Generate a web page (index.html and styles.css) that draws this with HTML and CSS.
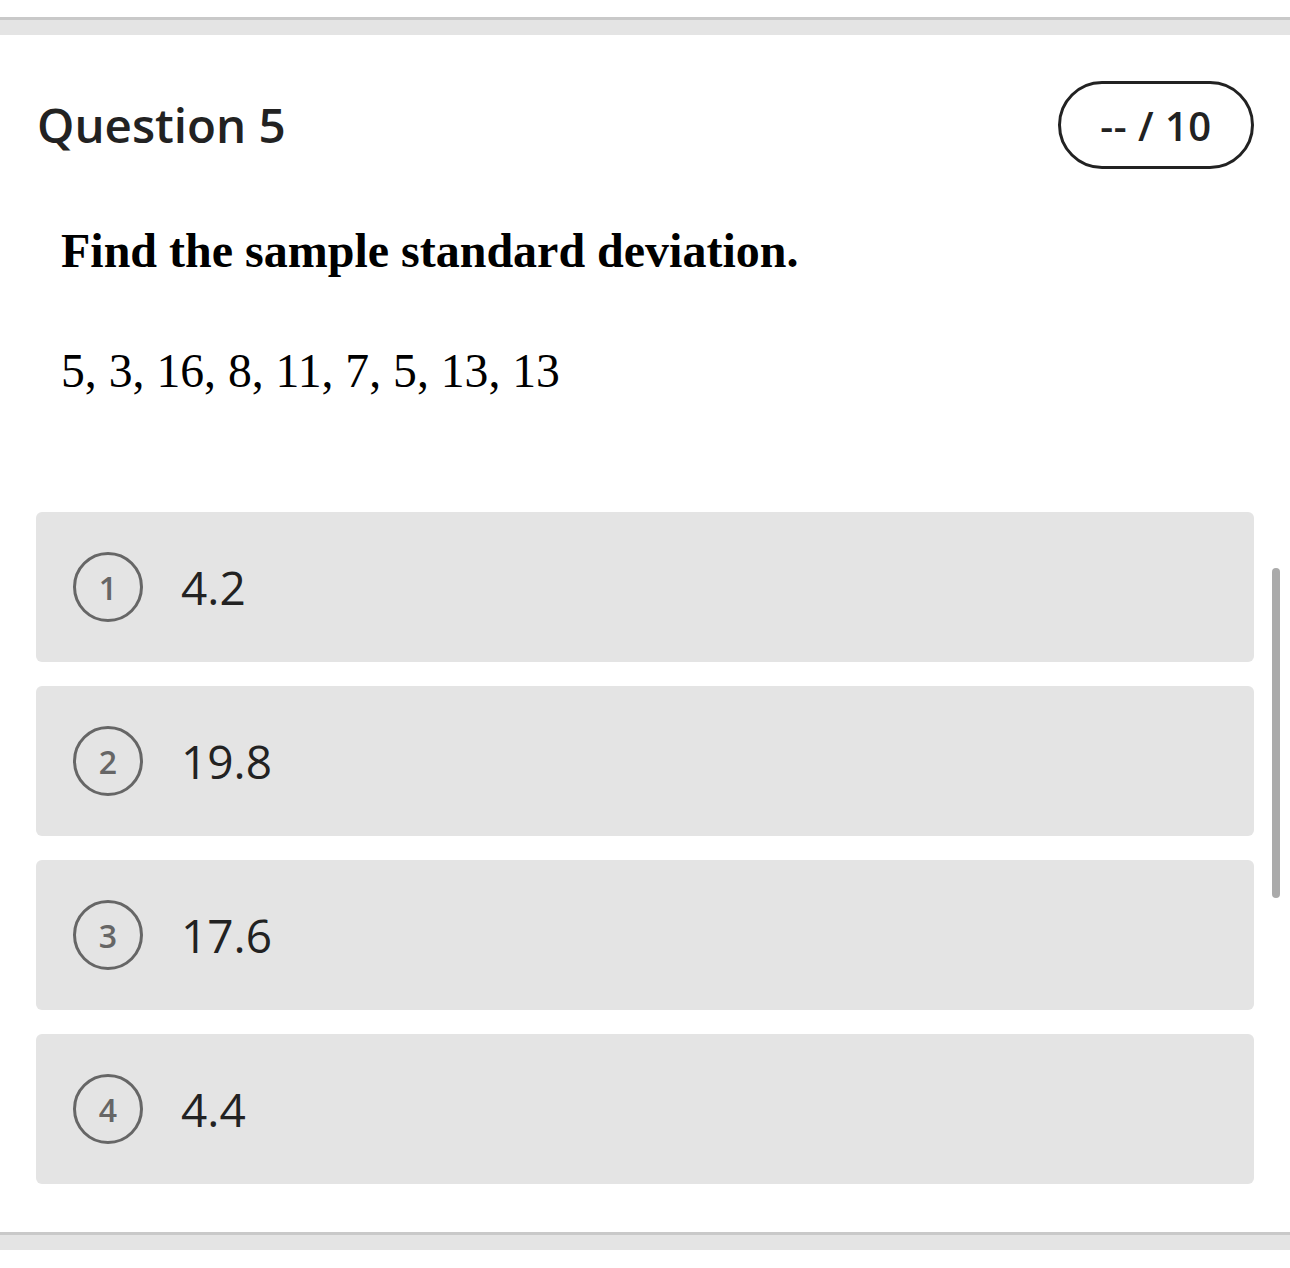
FILE: index.html
```html
<!DOCTYPE html>
<html>

<head lang="en">
    <meta charset="UTF-8">
    <title>Question 5</title>
    <link rel="stylesheet" href="styles.css">
</head>

<body>
    <div class="bar bar-top"></div>

    <div class="question">
        <div class="question-head">
            <h2 class="question-title">Question 5</h2>
            <div class="points">-- / 10</div>
        </div>

        <div class="prompt">
            <p class="prompt-title">Find the sample standard deviation.</p>
            <p class="prompt-data">5, 3, 16, 8, 11, 7, 5, 13, 13</p>
        </div>

        <ul class="answers">
            <li class="answer">
                <span class="answer-num">1</span>
                <span class="answer-text">4.2</span>
            </li>
            <li class="answer">
                <span class="answer-num">2</span>
                <span class="answer-text">19.8</span>
            </li>
            <li class="answer">
                <span class="answer-num">3</span>
                <span class="answer-text">17.6</span>
            </li>
            <li class="answer">
                <span class="answer-num">4</span>
                <span class="answer-text">4.4</span>
            </li>
        </ul>
    </div>

    <div class="bar bar-bottom"></div>

    <div class="scrollbar"></div>
</body>

</html>
```

FILE: styles.css
```css
/*reset*/
body,
h2,
p,
ul,
li {
    margin: 0;
    padding: 0;
}

ul {
    list-style: none;
}

body {
    font-family: "Open Sans", "Noto Sans", sans-serif;
    color: #222;
    background: #fff;
}

/*上下的灰色分隔条*/
.bar {
    height: 15px;
    background: #e4e4e4;
    border-top: 3px solid #c9c9c9;
}

.bar-top {
    margin-top: 17px;
}

.bar-bottom {
    margin-top: 48px;
}

.question {
    padding: 0 36px;
}

.question-head {
    display: flex;
    justify-content: space-between;
    align-items: center;
    margin-top: 46px;
}

.question-title {
    font-size: 47.5px;
    font-weight: 600;
    line-height: 88px;
    padding-left: 1px;
    color: #222;
}

.points {
    width: 190px;
    height: 82px;
    border: 3px solid #222;
    border-radius: 44px;
    display: flex;
    align-items: center;
    justify-content: center;
    font-size: 40px;
    font-weight: 600;
    letter-spacing: 0.5px;
    color: #222;
}

.prompt {
    padding-left: 25px;
    font-family: "Liberation Serif", "Times New Roman", serif;
    color: #000;
}

.prompt-title {
    font-size: 48px;
    font-weight: bold;
    line-height: 56px;
    margin-top: 54px;
}

.prompt-data {
    font-size: 47.7px;
    line-height: 56px;
    margin-top: 64px;
}

.answers {
    margin-top: 113px;
    display: flex;
    flex-direction: column;
    gap: 24px;
}

.answer {
    height: 150px;
    background: #e4e4e4;
    border-radius: 6px;
    display: flex;
    align-items: center;
    padding-left: 37px;
}

.answer-num {
    width: 64px;
    height: 64px;
    border: 3px solid #666;
    border-radius: 50%;
    display: flex;
    align-items: center;
    justify-content: center;
    font-size: 32px;
    font-weight: 600;
    color: #666;
    flex-shrink: 0;
}

.answer-text {
    font-size: 46px;
    margin-left: 38px;
    color: #222;
}

/*右侧滚动条*/
.scrollbar {
    position: fixed;
    right: 10px;
    top: 568px;
    width: 8px;
    height: 330px;
    border-radius: 4px;
    background: #aaa;
}
```
